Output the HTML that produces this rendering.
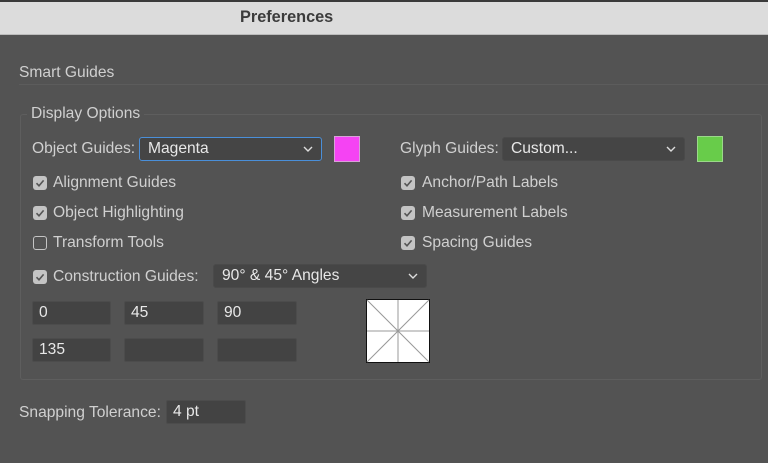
<!DOCTYPE html>
<html><head><style>
*{margin:0;padding:0;box-sizing:border-box}
body{width:768px;height:463px;background:#535353;font-family:"Liberation Sans",sans-serif;font-size:15.6px;color:#d0d0d0;position:relative;overflow:hidden}
.a{position:absolute}
.title{left:0;top:0;width:768px;height:35px;background:#dcdcdc;border-top:2px solid #3a3a3a;border-bottom:1px solid #bcbcbc}
.title span{position:absolute;left:240px;top:6px;font-weight:bold;font-size:16.3px;color:#3c3c3c}
.lbl{line-height:16px;white-space:nowrap}
.sel{background:#454545;border:1px solid #4a4a4a;border-radius:3px;color:#e8e8e8;padding-left:8px;line-height:22px}
.sel svg{position:absolute;right:8px;top:8px}
.fld{background:#434343;border:1px solid #4c4c4c;border-radius:2px;color:#e8e8e8;padding-left:6px;line-height:22px;height:24px}
.cb{width:14px;height:14px;border-radius:3px;background:#c4c4c4}
.cb.off{background:none;border:1px solid #c4c4c4}
</style></head><body>
<div class="a title"><span>Preferences</span></div>
<div class="a lbl" style="left:19px;top:65px">Smart Guides</div>
<div class="a" style="left:19px;top:84px;width:749px;height:1px;background:#5c5c5c"></div>
<div class="a" style="left:20px;top:114px;width:742px;height:266px;border:1px solid #5e5e5e;border-radius:3px"></div>
<div class="a lbl" style="left:27px;top:106px;background:#535353;padding:0 4px">Display Options</div>

<div class="a lbl" style="left:32px;top:141px">Object Guides:</div>
<div class="a sel" style="left:139px;top:137px;width:183px;height:24px;border:1px solid #4a8fd9">Magenta<svg width="10" height="6"><path d="M1 1l4 4 4-4" stroke="#ddd" fill="none" stroke-width="1.4"/></svg></div>
<div class="a" style="left:334px;top:136px;width:26px;height:26px;background:#f543f3;border:1px solid #d8a0d8"></div>
<div class="a lbl" style="left:400px;top:141px">Glyph Guides:</div>
<div class="a sel" style="left:502px;top:137px;width:183px;height:24px">Custom...<svg width="10" height="6"><path d="M1 1l4 4 4-4" stroke="#ddd" fill="none" stroke-width="1.4"/></svg></div>
<div class="a" style="left:697px;top:136px;width:26px;height:26px;background:#68cc4a;border:1px solid #9bd88a"></div>

<svg width="0" height="0" style="position:absolute"><defs><path id="ck" d="M3.5 7.2l2.5 2.6 4.6-5.4" stroke="#555" stroke-width="1.6" fill="none"/></defs></svg>
<div class="a cb" style="left:33px;top:176px"><svg width="14" height="14"><use href="#ck"/></svg></div>
<div class="a lbl" style="left:53px;top:175px">Alignment Guides</div>
<div class="a cb" style="left:33px;top:206px"><svg width="14" height="14"><use href="#ck"/></svg></div>
<div class="a lbl" style="left:53px;top:205px">Object Highlighting</div>
<div class="a cb off" style="left:33px;top:236px"></div>
<div class="a lbl" style="left:53px;top:235px">Transform Tools</div>
<div class="a cb" style="left:33px;top:270px"><svg width="14" height="14"><use href="#ck"/></svg></div>
<div class="a lbl" style="left:53px;top:269px">Construction Guides:</div>
<div class="a sel" style="left:213px;top:264px;width:214px;height:24px">90° &amp; 45° Angles<svg width="10" height="6"><path d="M1 1l4 4 4-4" stroke="#ddd" fill="none" stroke-width="1.4"/></svg></div>

<div class="a cb" style="left:401px;top:176px"><svg width="14" height="14"><use href="#ck"/></svg></div>
<div class="a lbl" style="left:422px;top:175px">Anchor/Path Labels</div>
<div class="a cb" style="left:401px;top:206px"><svg width="14" height="14"><use href="#ck"/></svg></div>
<div class="a lbl" style="left:422px;top:205px">Measurement Labels</div>
<div class="a cb" style="left:401px;top:236px"><svg width="14" height="14"><use href="#ck"/></svg></div>
<div class="a lbl" style="left:422px;top:235px">Spacing Guides</div>

<div class="a fld" style="left:32px;top:301px;width:79px">0</div>
<div class="a fld" style="left:124px;top:301px;width:80px">45</div>
<div class="a fld" style="left:217px;top:301px;width:80px">90</div>
<div class="a fld" style="left:32px;top:338px;width:79px">135</div>
<div class="a fld" style="left:124px;top:338px;width:80px"></div>
<div class="a fld" style="left:217px;top:338px;width:80px"></div>
<svg class="a" style="left:366px;top:299px" width="64" height="64"><rect x="0.5" y="0.5" width="63" height="63" fill="#fff" stroke="#111"/><path d="M1 1L63 63M63 1L1 63M32 1V63M1 32H63" stroke="#999" stroke-width="1"/></svg>

<div class="a lbl" style="left:19px;top:405px">Snapping Tolerance:</div>
<div class="a fld" style="left:166px;top:400px;width:80px">4 pt</div>
</body></html>
